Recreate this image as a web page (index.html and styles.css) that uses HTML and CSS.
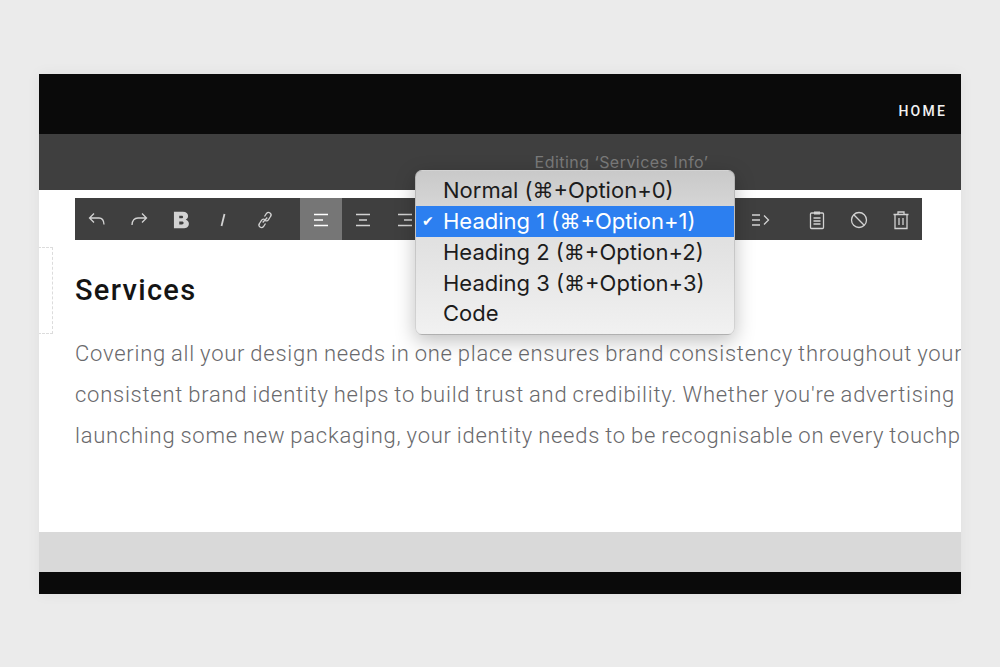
FILE: index.html
```html
<!DOCTYPE html>
<html lang="en">
<head>
<meta charset="utf-8">
<title>Services</title>
<link rel="stylesheet" href="styles.css">
</head>
<body>
<div class="frame">
  <nav class="nav"><span class="nav-link">HOME</span></nav>
  <div class="edit-bar"><span class="edit-label">Editing ‘Services Info’</span></div>
  <main class="content">
    <div class="toolbar">
      <div class="group">
        <button class="tool"><svg viewBox="0 0 20 20"><path d="M7 3.500 2.500 8 7 12.500M2.500 8H12c3 0 4.800 2 5 6.500"/></svg></button>
        <button class="tool"><svg viewBox="0 0 20 20"><path d="M13 3.500 17.500 8 13 12.500M17.500 8H9C5.500 8 3.300 10.500 3 15"/></svg></button>
        <button class="tool"><svg viewBox="1 1.500 17 17"><path class="solid" fill-rule="evenodd" d="M3.500 3h7.500c3 0 4.500 1.500 4.500 3.700 0 1.500-.8 2.500-2 3 1.600.4 2.700 1.600 2.700 3.400 0 2.600-1.900 3.900-5 3.900H3.500zM8 6.300v2.300h2c.8 0 1.300-.4 1.300-1.150S10.800 6.300 10 6.300zM8 11.300v2.500h2.300c.9 0 1.400-.5 1.400-1.250s-.5-1.250-1.400-1.250z"/></svg></button>
        <button class="tool"><svg viewBox="0 0 20 20"><path class="thick" d="M11.500 4 8.500 16"/></svg></button>
        <button class="tool"><svg viewBox="0 0 20 20"><path d="m9.500 6.500 2-3a2.500 2.500 0 0 1 4 3l-2 3.200a2.500 2.500 0 0 1-3.300.8M10.500 13.500l-2 3a2.500 2.500 0 0 1-4-3l2-3.200a2.500 2.500 0 0 1 3.300-.8M12.300 7.500l-4.600 5"/></svg></button>
      </div>
      <div class="group">
        <button class="tool active"><svg viewBox="0 0 20 20"><path d="M3 4.500h14M3 10h9M3 15.500h14"/></svg></button>
        <button class="tool"><svg viewBox="0 0 20 20"><path d="M3 4.500h14M6 10h8M3 15.500h14"/></svg></button>
        <button class="tool"><svg viewBox="0 0 20 20"><path d="M3 4.500h14M9 10h8M3 15.500h14"/></svg></button>
      </div>
      <div class="group push">
        <button class="tool"><svg viewBox="0 0 20 20"><path d="M1 5h8M1 10h8M1 15h8M13 5.500l4.500 4.500-4.500 4.500"/></svg></button>
      </div>
      <div class="group">
        <button class="tool"><svg viewBox="0 0 20 20"><path d="M4.500 3h11a1 1 0 0 1 1 1v13.500a1 1 0 0 1-1 1h-11a1 1 0 0 1-1-1V4a1 1 0 0 1 1-1zM6.500 8h7M6.500 11h7M6.500 14h7"/><path class="solid" d="M7 1.500h6v3H7z"/></svg></button>
        <button class="tool"><svg viewBox="0 0 20 20"><circle cx="10" cy="10" r="7.500"/><path d="m4.800 4.800 10.400 10.400"/></svg></button>
        <button class="tool"><svg viewBox="0 0 20 20"><path d="M2.500 4.500h15M7 4.500V2h6v2.500M4 4.500h12v14H4zM8 8v7M12 8v7"/></svg></button>
      </div>
    </div>
    <h1 class="title">Services</h1>
    <p class="body-text">
      <span class="line">Covering all your design needs in one place ensures brand consistency throughout your</span>
      <span class="line">consistent brand identity helps to build trust and credibility. Whether you're advertising</span>
      <span class="line">launching some new packaging, your identity needs to be recognisable on every touchp</span>
    </p>
    <div class="drop-zone"></div>
  </main>
  <div class="band"></div>
  <div class="footer"></div>
  <ul class="menu">
    <li class="item">Normal (<span class="cmd">⌘</span>+Option+0)</li>
    <li class="item selected">Heading 1 (<span class="cmd">⌘</span>+Option+1)</li>
    <li class="item">Heading 2 (<span class="cmd">⌘</span>+Option+2)</li>
    <li class="item">Heading 3 (<span class="cmd">⌘</span>+Option+3)</li>
    <li class="item">Code</li>
  </ul>
</div>
</body>
</html>
```
FILE: styles.css
```css
* { box-sizing: border-box; }
html, body { margin: 0; height: 100%; }
body {
  background: #ebebeb;
  padding: 74px 39px 73px;
  font-family: "Roboto", "Liberation Sans", sans-serif;
  overflow: hidden;
}
.frame {
  position: relative;
  display: flex;
  flex-direction: column;
  width: 922px;
  height: 520px;
  box-shadow: 0 0 14px rgba(0, 0, 0, .05);
}
.nav {
  height: 60px;
  background: #0a0a0a;
  display: flex;
  align-items: center;
  justify-content: flex-end;
  padding: 14px 14px 0 0;
}
.nav-link {
  color: #f2f2f2;
  font-size: 14px;
  font-weight: 500;
  letter-spacing: 2.200px;
}
.edit-bar {
  height: 56px;
  background: #3f3f3f;
  display: flex;
  justify-content: center;
  padding-top: 18px;
  padding-left: 243px;
}
.edit-label {
  color: #7a7a7a;
  font-family: "Inter", sans-serif;
  font-size: 16px;
  line-height: 20px;
  letter-spacing: .47px;
}
.content {
  position: relative;
  flex: 1;
  background: #fff;
  padding: 8px 0 0 36px;
  overflow: hidden;
}
.toolbar {
  display: flex;
  width: 847px;
  height: 42px;
  background: #3f3f3f;
  padding-left: 1px;
}
.group { display: flex; margin-right: 14px; }
.group:last-child { margin-right: 0; }
.group.push { margin-left: auto; }
.tool {
  width: 42px;
  height: 42px;
  padding: 1px 0 0;
  border: 0;
  background: transparent;
  display: flex;
  align-items: center;
  justify-content: center;
}
.tool.active { background: #767676; }
.tool svg {
  width: 20px;
  height: 20px;
  fill: none;
  stroke: #d2d2d2;
  stroke-width: 1.300;
}
.tool.active svg { stroke: #fff; }
.tool svg .solid { fill: #d2d2d2; stroke: none; }
.tool svg .thick { stroke-width: 1.800; }
.title {
  margin: 32px 0 0;
  color: #141414;
  font-size: 29px;
  line-height: 36px;
  font-weight: 500;
  letter-spacing: 1.300px;
}
.body-text {
  margin: 25px 0 0;
  color: #69696c;
  font-size: 22px;
  font-weight: 300;
  line-height: 41px;
  letter-spacing: .75px;
  word-spacing: -1px;
  white-space: nowrap;
}
.line { display: block; }
.drop-zone {
  position: absolute;
  left: -1px;
  top: 57px;
  width: 15px;
  height: 87px;
  border: 1px dashed #dcdcdc;
}
.band { height: 40px; background: #d9d9d9; }
.footer { height: 22px; background: #0a0a0a; }
.menu {
  position: absolute;
  left: 376px;
  top: 96px;
  width: 320px;
  height: 165px;
  margin: 0;
  padding: 4px 0 0;
  list-style: none;
  border-radius: 7px;
  border: 1px solid rgba(0, 0, 0, .12);
  background: linear-gradient(#c9c9c9, #e0e0e0 40%, #f1f1f1);
  box-shadow: 0 6px 20px rgba(0, 0, 0, .25);
}
.item {
  height: 31px;
  line-height: 30px;
  padding-left: 27px;
  color: #1c1c1c;
  font-family: "Inter", sans-serif;
  font-size: 22px;
  white-space: nowrap;
}
.item:last-child { line-height: 28px; }
.cmd { font-family: "DejaVu Sans", sans-serif; font-size: 21px; }
.item.selected { position: relative; background: #2c7ff0; color: #fff; }
.item.selected::before {
  content: "✔";
  position: absolute;
  left: 6px;
  font-size: 14px;
  font-family: "DejaVu Sans", sans-serif;
}
```
